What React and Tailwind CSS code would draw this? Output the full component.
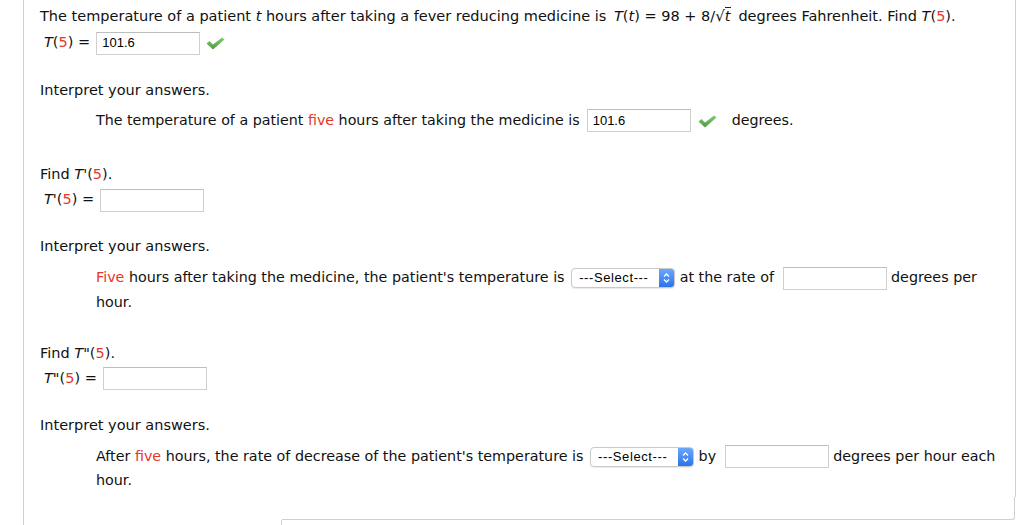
import React from 'react';

const red = 'text-[#e8352a]';

function Check() {
  return (
    <svg width="19" height="13" viewBox="0 0 19 13" className="inline-block align-middle">
      <defs>
        <linearGradient id="chk" x1="0" y1="0" x2="0" y2="1">
          <stop offset="0" stopColor="#86c976" />
          <stop offset="1" stopColor="#4f9a3f" />
        </linearGradient>
      </defs>
      <path d="M0.5 6.5 L3.5 4 L7 7.5 L16 0.5 L18.5 2.5 L7 12.5 Z" fill="url(#chk)" />
    </svg>
  );
}

function Box({ value, className = '' }) {
  return (
    <span
      className={
        'inline-flex items-center align-middle w-[104px] h-[23px] border border-[#cfcfcf] border-t-[#bdbdbd] bg-white pl-[5px] text-[13px] text-black ' +
        className
      }
      style={{ fontFamily: '"Liberation Sans", Arial, sans-serif' }}
    >
      {value}
    </span>
  );
}

function Select({ className = '' }) {
  return (
    <span
      className={
        'inline-flex items-stretch align-middle w-[104px] h-[20px] rounded-[4px] border border-[#c9c9c9] bg-white shadow-[0_1px_1px_rgba(0,0,0,0.08)] overflow-hidden ' +
        className
      }
    >
      <span
        className="flex-1 flex items-center pl-[7px] text-[13px] tracking-[0.6px] text-black"
        style={{ fontFamily: '"Liberation Sans", Arial, sans-serif' }}
      >
        ---Select---
      </span>
      <span className="w-[15px] flex items-center justify-center bg-gradient-to-b from-[#6aa8fb] to-[#2c72ea]">
        <svg width="7" height="12" viewBox="0 0 7 12">
          <path d="M1 4.5 L3.5 2 L6 4.5 M1 7.5 L3.5 10 L6 7.5" stroke="#fff" strokeWidth="1.3" fill="none" />
        </svg>
      </span>
    </span>
  );
}

function T({ primes = '' }) {
  return (
    <i>
      T{primes}
    </i>
  );
}

export default function App() {
  return (
    <div
      className="w-[1024px] h-[525px] overflow-hidden bg-white text-[14.5px] text-[#111]"
      style={{ fontFamily: '"DejaVu Sans", Verdana, sans-serif' }}
    >
      <div className="ml-[23px] h-[525px] border-l border-[#cfcfcf] flex flex-col">
        <div className="w-[992px] h-[497px] border-r border-[#cfcfcf] pl-[16px]">
          <div className="mt-[4px] leading-[24px] whitespace-nowrap">
            The temperature of a patient <i>t</i> hours after taking a fever reducing medicine is{' '}
            <span className="ml-[3px]">
              <T />(<i>t</i>) = 98 + 8/<span className="text-[15px]">√</span>
              <span className="border-t border-[#222] pr-[1px]"><i>t</i></span>
            </span>
            <span className="ml-[7px]">degrees Fahrenheit. Find </span>
            <T />(<span className={red}>5</span>).
          </div>

          <div className="mt-[3px] h-[24px] flex items-center pl-[4px] whitespace-nowrap">
            <T />(<span className={red}>5</span>) =<Box value="101.6" className="ml-[6px]" />
            <span className="ml-[6px] mt-[1px]"><Check /></span>
          </div>

          <div className="mt-[23px] leading-[24px]">Interpret your answers.</div>

          <div className="mt-[6px] pl-[56px] h-[25px] flex items-center whitespace-nowrap text-[14.25px]">
            The temperature of a patient&nbsp;<span className={red}>five</span>&nbsp;hours after taking the medicine is
            <Box value="101.6" className="ml-[7px]" />
            <span className="ml-[7px] mt-[1px]"><Check /></span>
            <span className="ml-[15px]">degrees.</span>
          </div>

          <div className="mt-[29px] leading-[24px]">
            Find <T primes="'" />(<span className={red}>5</span>).
          </div>
          <div className="mt-[2px] h-[24px] flex items-center pl-[4px] whitespace-nowrap">
            <T primes="'" />(<span className={red}>5</span>) =<Box className="ml-[6px]" />
          </div>

          <div className="mt-[22px] leading-[24px]">Interpret your answers.</div>

          <div className="mt-[7px] pl-[56px] leading-[24px] whitespace-nowrap text-[14.3px]">
            <span className={red}>Five</span> hours after taking the medicine, the patient's temperature is{' '}
            <Select className="ml-[2px]" /> at the rate of <Box className="ml-[4px]" /> degrees per
            <br />
            hour.
          </div>

          <div className="mt-[27px] leading-[24px]">
            Find <T primes={'"'} />(<span className={red}>5</span>).
          </div>
          <div className="mt-[2px] h-[24px] flex items-center pl-[4px] whitespace-nowrap">
            <T primes={'"'} />(<span className={red}>5</span>) =<Box className="ml-[6px]" />
          </div>

          <div className="mt-[22px] leading-[24px]">Interpret your answers.</div>

          <div className="mt-[7px] pl-[56px] leading-[24px] whitespace-nowrap text-[14.3px]">
            After <span className={red}>five</span> hours, the rate of decrease of the patient's temperature is{' '}
            <Select className="ml-[2px]" /> by <Box className="ml-[4px]" /> degrees per hour each
            <br />
            hour.
          </div>
        </div>
        <div className="flex h-[23px]">
          <div className="w-[258px]" />
          <div className="w-[733px] border-r border-b border-[#cfcfcf] rounded-br-[3px]" />
        </div>
        <div className="ml-[257px] h-[5px] border-l border-[#cfcfcf]" />
      </div>
    </div>
  );
}
